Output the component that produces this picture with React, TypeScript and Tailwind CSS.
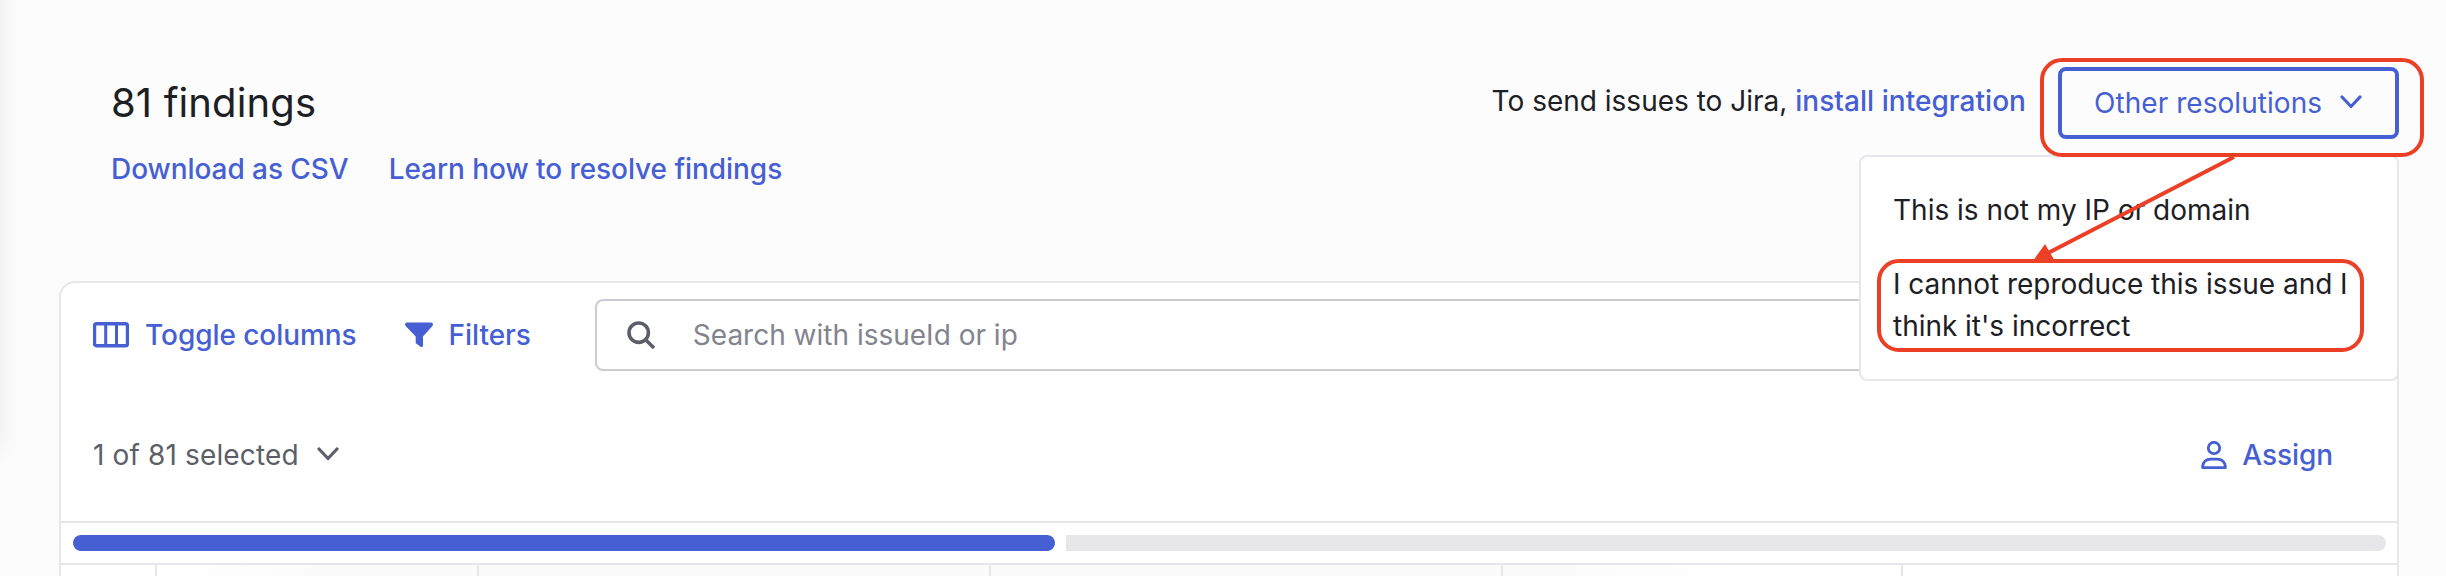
import React from "react";

const linkClass = "font-medium tracking-[-0.06px] text-[#465fd3]";
const columnWidths = ["w-[96px]", "w-[322px]", "w-[512px]", "w-[512px]", "w-[400px]"];

function ColumnsIcon() {
  return (
    <svg width="36" height="26" viewBox="0 0 36 26" fill="none" stroke="#465fd3">
      <rect x="1.5" y="1.75" width="33" height="22" rx="2" strokeWidth="3.4" />
      <path d="M12.7 2v22M23.5 2v22" strokeWidth="3" />
    </svg>
  );
}

function FilterIcon() {
  return (
    <svg width="28" height="26" viewBox="0 0 28 26" fill="#465fd3">
      <path d="M2 0.5h24q2 0 2 1.9q0 .8-.6 1.6L18 14.5v9q0 1.6-1.7 1.5q-.6 0-1.1-.4L11.5 21.8q-.8-.6-.8-1.6v-5.7L.6 4Q0 3.2 0 2.4Q0 .5 2 .5z" />
    </svg>
  );
}

function SearchIcon() {
  return (
    <svg width="28" height="28" viewBox="0 0 28 28" fill="none" stroke="#5c5f68" strokeWidth="3.6">
      <circle cx="11.7" cy="11.7" r="9.7" />
      <path d="M18.5 18.5L27 27" />
    </svg>
  );
}

function Chevron({ color }: { color: string }) {
  return (
    <svg className="mb-[3px]" width="22" height="14" viewBox="0 0 22 14" fill="none" stroke={color} strokeWidth="3.2" strokeLinecap="round" strokeLinejoin="round">
      <path d="M2 2l9 9.500l9-9.500" />
    </svg>
  );
}

function PersonIcon() {
  return (
    <svg width="26" height="28" viewBox="0 0 26 28" fill="none" stroke="#465fd3" strokeWidth="2.8" strokeLinejoin="round">
      <circle cx="13" cy="7" r="5.7" />
      <path d="M1.6 26.6v-.8q.8-7.600 8.400-7.600h6q7.600 0 8.400 7.600v.8z" />
    </svg>
  );
}

export default function App() {
  return (
    <div className="relative flex h-[576px] w-[2446px] flex-col overflow-hidden bg-[#fcfcfc] font-['Inter',sans-serif] text-[28px] leading-[42px] text-[#1c2024]">
      <div className="absolute -left-10 -top-10 h-[490px] w-10 shadow-[0_0_24px_rgba(0,0,0,0.08)]" />

      <header className="flex h-[281px] shrink-0 justify-between pl-[111px] pr-[47px]">
        <div className="pt-[75px]">
          <h1 className="text-[40px] leading-[56px] tracking-[0.12px]">81 findings</h1>
          <nav className="mt-[17px] flex gap-10">
            <a className={linkClass}>Download as CSV</a>
            <a className={linkClass}>Learn how to resolve findings</a>
          </nav>
        </div>
        <div className="flex items-start pt-[67px]">
          <p className="mr-8 mt-[13px] whitespace-pre">
            To send issues to Jira, <a className="font-medium tracking-[0.04px] text-[#465fd3]">install integration</a>
          </p>
          <button className="flex h-[72px] w-[341px] items-center justify-between rounded-lg border-4 border-[#465fd3] pl-8 pr-[33px] tracking-[0.05px] text-[#465fd3]">
            Other resolutions
            <Chevron color="#465fd3" />
          </button>
        </div>
      </header>

      <main className="ml-[59px] flex h-[320px] w-[2340px] shrink-0 flex-col rounded-2xl border-2 border-[#e6e6eb] bg-white">
        <div className="flex items-start pl-8 pr-8 pt-4">
          <div className="flex h-[72px] items-center">
            <ColumnsIcon />
            <span className={`ml-4 ${linkClass}`}>Toggle columns</span>
          </div>
          <div className="ml-[48px] flex h-[72px] items-center">
            <FilterIcon />
            <span className={`ml-4 ${linkClass}`}>Filters</span>
          </div>
          <div className="ml-16 flex h-[72px] grow items-center rounded-lg border-2 border-[#cbcbd3] pl-[30px] text-[#82848e]">
            <SearchIcon />
            <span className="ml-[38px]">Search with issueId or ip</span>
          </div>
        </div>
        <div className="flex h-[152px] shrink-0 items-center justify-between border-b-2 border-[#e6e6eb] pl-8 pr-[64px] pt-[18px]">
          <div className="flex items-center tracking-[0.14px] text-[#5c5f68]">
            1 of 81 selected
            <span className="ml-[18px]">
              <Chevron color="#5c5f68" />
            </span>
          </div>
          <div className="flex items-center">
            <PersonIcon />
            <span className={`ml-[15px] ${linkClass}`}>Assign</span>
          </div>
        </div>
        <div className="flex h-[42px] shrink-0 items-center border-b-2 border-[#e6e6eb] pl-3 pr-[11px]">
          <div className="h-4 w-[982px] rounded-full bg-[#465fd3]" />
          <div className="ml-[11px] h-4 grow rounded-r-full bg-[#e6e6eb]" />
        </div>
        <div className="flex h-[30px] shrink-0 bg-[linear-gradient(to_right,#fff_80px,#fbfbfb_260px,#fbfbfb_1500px,#fff_1700px)]">
          {columnWidths.map((w, i) => (
            <div key={i} className={`${w} border-r-2 border-[#e6e6eb]`} />
          ))}
        </div>
      </main>

      <div className="absolute left-[1859px] top-[155px] h-[226px] w-[540px] rounded-lg border-2 border-[#e6e6eb] bg-white pl-8 pt-8">
        <p>This is not my IP or domain</p>
        <p className="mt-8 w-[470px] tracking-[-0.03px]">
          I cannot reproduce this issue and I
          <br />
          think it's incorrect
        </p>
      </div>

      <div className="absolute left-[2040px] top-[58px] h-[99px] w-[384px] rounded-[22px] border-4 border-[#ec4026]" />
      <div className="absolute left-[1877px] top-[259px] h-[93px] w-[487px] rounded-[22px] border-4 border-[#ec4026]" />
      <svg className="absolute left-[2000px] top-[140px]" width="260" height="140" viewBox="0 0 260 140">
        <path d="M234 17L48 113" stroke="#ec4026" strokeWidth="4" />
        <path d="M34 119.500L45 104L54 119.500z" fill="#ec4026" />
      </svg>
    </div>
  );
}
